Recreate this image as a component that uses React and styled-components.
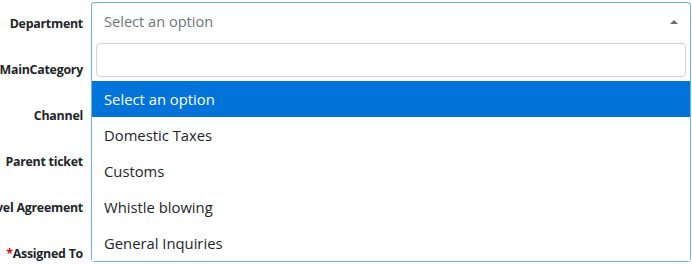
import React from "react";
import styled, { createGlobalStyle } from "styled-components";

const GlobalStyle = createGlobalStyle`
	body {
		margin: 0;
		background: #fff;
		font-family: "Open Sans", "Noto Sans", sans-serif;
		color: #212529;
	}
`;

const labels = [
	{ text: "Department" },
	{ text: "MainCategory" },
	{ text: "Channel" },
	{ text: "Parent ticket" },
	{ text: "Service Level Agreement" },
	{ text: "Assigned To", required: true },
];

const options = [
	"Select an option",
	"Domestic Taxes",
	"Customs",
	"Whistle blowing",
	"General Inquiries",
];

function App() {
	return (
		<>
			<GlobalStyle />
			<Form>
				{labels.map((l, i) => (
					<Row key={l.text}>
						<Label>
							{l.required && <Star>*</Star>}
							{l.text}
						</Label>
						<Field>
							{i === 0 && (
								<SelectWrap>
									<Selection>
										<Placeholder>Select an option</Placeholder>
										<Arrow />
									</Selection>
									<Dropdown>
										<SearchBox>
											<SearchInput type="text" />
										</SearchBox>
										<Options>
											{options.map((o, j) => (
												<Option key={o} highlighted={j === 0}>
													{o}
												</Option>
											))}
										</Options>
									</Dropdown>
								</SelectWrap>
							)}
						</Field>
					</Row>
				))}
			</Form>
		</>
	);
}

const Form = styled.div`
	width: 692px;
	height: 264px;
	overflow: hidden;
	display: flex;
	flex-direction: column;
`;

const Row = styled.div`
	display: grid;
	grid-template-columns: 83px 1fr;
	column-gap: 8px;
	height: 46px;
	flex-shrink: 0;
	align-items: center;
`;

const Label = styled.div`
	display: flex;
	justify-content: flex-end;
	white-space: nowrap;
	font-size: 12.4px;
	font-weight: 700;
	color: #212529;
	letter-spacing: -0.25px;
`;

const Star = styled.span`
	color: #e3001b;
`;

const Field = styled.div`
	position: relative;
	height: 100%;
`;

const SelectWrap = styled.div`
	position: absolute;
	top: 2px;
	left: 0;
	width: 600px;
	z-index: 10;
`;

const Selection = styled.div`
	height: 37px;
	box-sizing: border-box;
	border: 1px solid #6ab0f3;
	border-bottom: none;
	border-radius: 4px 4px 0 0;
	display: flex;
	align-items: center;
	justify-content: space-between;
	padding: 0 12px 0 12px;
	background: #fff;
`;

const Placeholder = styled.span`
	font-size: 14.6px;
	color: #6c757d;
`;

const Arrow = styled.span`
	width: 0;
	height: 0;
	border-left: 4px solid transparent;
	border-right: 4px solid transparent;
	border-bottom: 4px solid #6a7078;
	margin-top: 1px;
`;

const Dropdown = styled.div`
	box-sizing: border-box;
	border: 1px solid #6ab0f3;
	border-top: none;
	border-radius: 0 0 4px 4px;
	background: #fff;
`;

const SearchBox = styled.div`
	padding: 4px;
`;

const SearchInput = styled.input`
	display: block;
	width: 100%;
	height: 34px;
	box-sizing: border-box;
	border: 1px solid #ced4da;
	border-radius: 4px;
	outline: none;
	font-family: inherit;
`;

const Options = styled.ul`
	list-style: none;
	margin: 0;
	padding: 0;
`;

const Option = styled.li`
	height: 36px;
	display: flex;
	align-items: center;
	padding: 0 12px;
	font-size: 14.8px;
	background: ${(p) => (p.highlighted ? "#0273d9" : "#fff")};
	color: ${(p) => (p.highlighted ? "#fff" : "#212529")};
`;

export default App;
